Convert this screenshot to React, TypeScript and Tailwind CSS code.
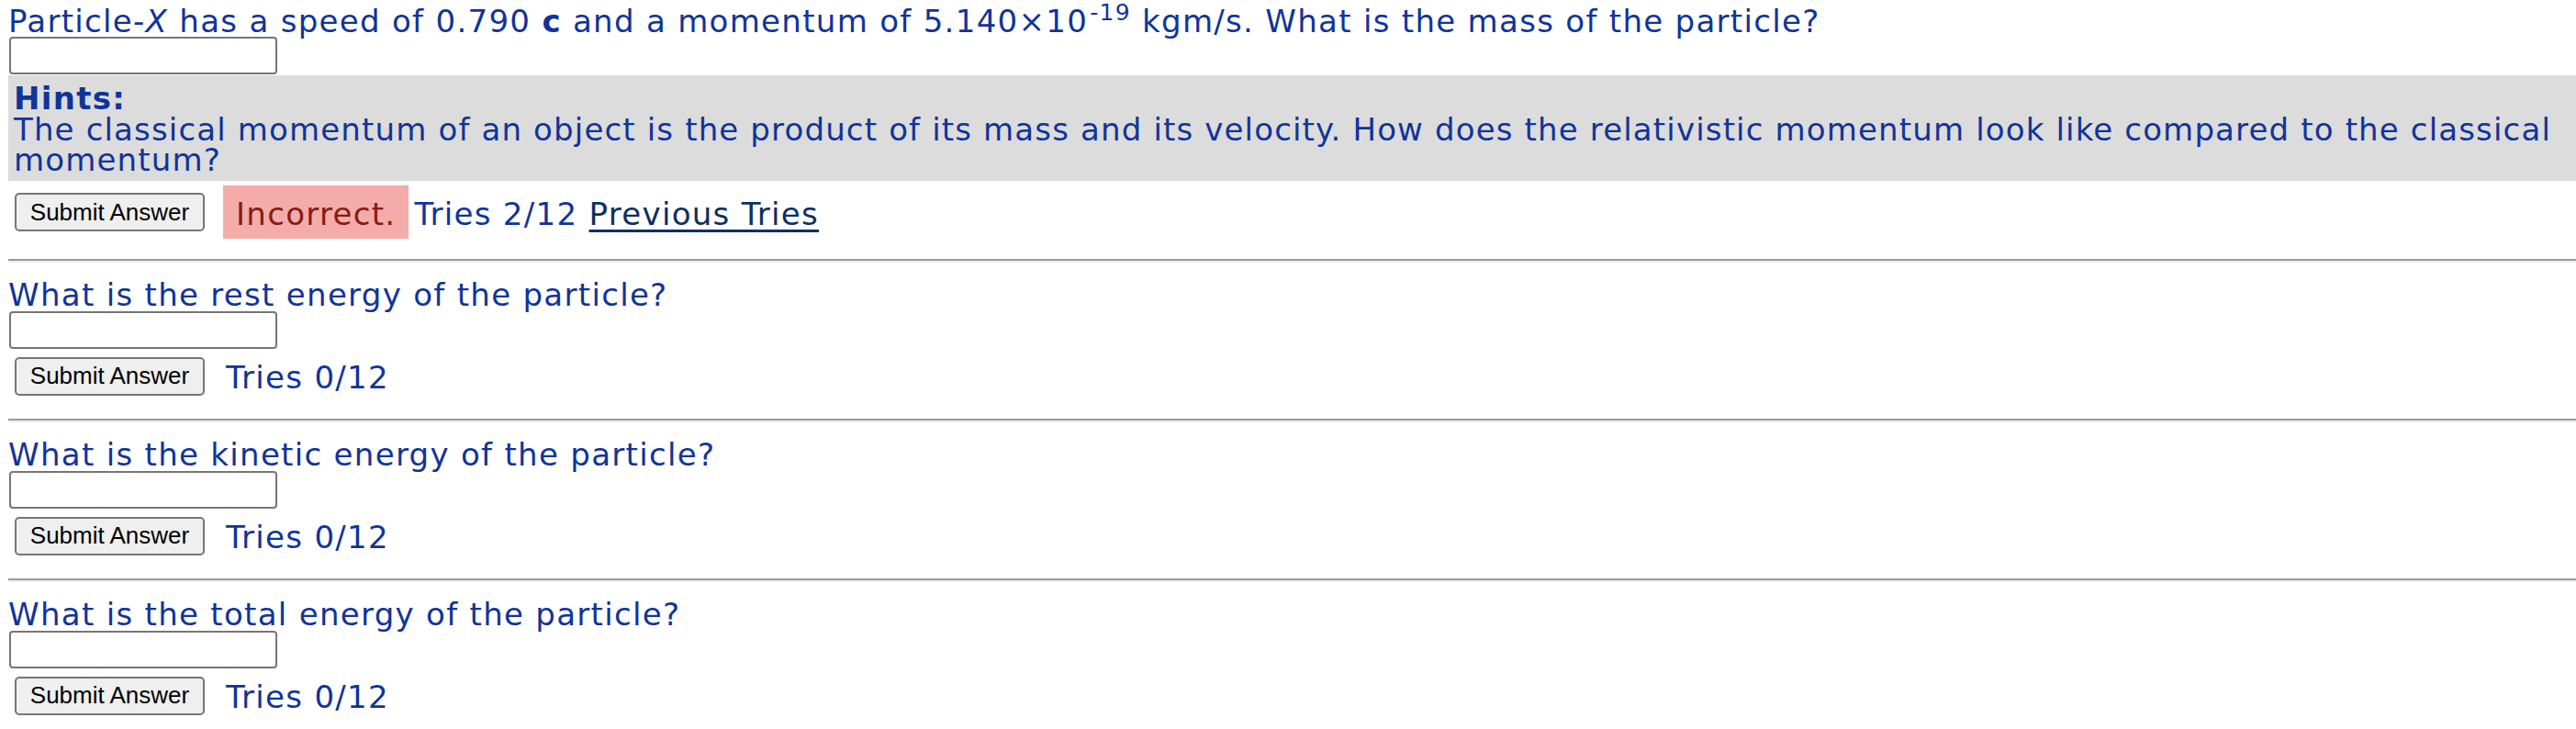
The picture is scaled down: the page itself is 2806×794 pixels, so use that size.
import React from "react";

const blue = "text-[#10349a]";

function Input() {
  return (
    <div className="ml-[1px] h-[41px] w-[292px] rounded-[4px] border-2 border-[#767676] bg-white" />
  );
}

function SubmitButton() {
  return (
    <button
      className="ml-[7px] flex h-[42px] w-[207px] items-center justify-center rounded-[5px] border-2 border-[#767676] bg-[#efefef] text-[26px] tracking-normal text-black"
      style={{ fontFamily: '"Liberation Sans", Arial, sans-serif' }}
    >
      Submit Answer
    </button>
  );
}

function Rule() {
  return <div className="h-[4px] border-t-2 border-b-2 border-t-[#9a9a9a] border-b-[#ececec]" />;
}

function Part({ question }: { question: string }) {
  return (
    <div>
      <Rule />
      <div className={`mt-[12px] h-[41px] whitespace-nowrap pt-[6px] leading-[35px] ${blue}`}>{question}</div>
      <Input />
      <div className="mt-[8px] flex h-[43px] items-center">
        <SubmitButton />
        <span className={`ml-[23px] h-[43px] pt-[3px] leading-[40px] ${blue}`}>Tries 0/12</span>
      </div>
      <div className="h-[25px]" />
    </div>
  );
}

export default function App() {
  return (
    <div
      className="min-h-[794px] w-[2806px] overflow-hidden bg-white pl-[9px] text-[34px] tracking-[1.3px]"
      style={{ fontFamily: '"DejaVu Sans", Verdana, sans-serif' }}
    >
      <div className={`h-[40px] whitespace-nowrap pt-[6px] leading-[34px] ${blue}`}>
        Particle-<i>X</i> has a speed of 0.790 <b>c</b> and a momentum of 5.140×10
        <span className="relative -top-[13px] ml-[2px] text-[25px] leading-none">-19</span> kgm/s. What is the mass of
        the particle?
      </div>
      <Input />
      <div className={`mt-[1px] h-[115px] bg-[#dcdcdc] pl-[6px] pt-[7px] ${blue}`}>
        <div className="h-[36px] font-bold leading-[36px]">Hints:</div>
        <div className="whitespace-nowrap leading-[33px] tracking-[1.15px]">
          The classical momentum of an object is the product of its mass and its velocity. How does the relativistic
          momentum look like compared to the classical
          <br />
          momentum?
        </div>
      </div>
      <div className="mt-[5px] flex h-[58px] items-center">
        <SubmitButton />
        <span className="ml-[20px] h-[58px] bg-[#f3aca9] px-[14px] pt-[4px] leading-[54px] text-[#8a1a12]">
          Incorrect.
        </span>
        <span className={`ml-[6px] h-[58px] whitespace-nowrap pt-[4px] leading-[54px] ${blue}`}>
          Tries 2/12{" "}
          <a className="cursor-pointer text-[#0c2f62] underline decoration-[3px] underline-offset-[5px]">
            Previous Tries
          </a>
        </span>
      </div>
      <div className="h-[22px]" />
      <Part question="What is the rest energy of the particle?" />
      <Part question="What is the kinetic energy of the particle?" />
      <Part question="What is the total energy of the particle?" />
    </div>
  );
}
